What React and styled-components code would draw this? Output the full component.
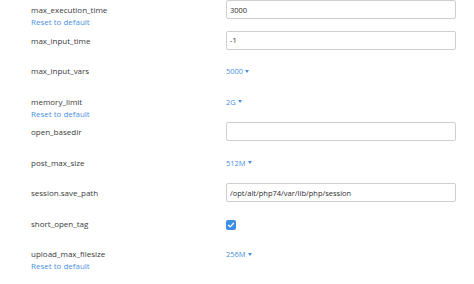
import React from 'react';
import styled, { createGlobalStyle } from 'styled-components';

const Global = createGlobalStyle`
  body {
    margin: 0;
    background: #ffffff;
    font-family: "Open Sans", "Noto Sans", sans-serif;
  }
`

const List = styled.div`
  display: flex;
  flex-direction: column;
  padding-left: 31px;
`

const Row = styled.div`
  display: grid;
  grid-template-columns: 195px 230px;
  height: 30.5px;
  align-items: start;
`

const LabelCell = styled.div`
  display: flex;
  flex-direction: column;
  padding-top: 4px;
`

const Label = styled.span`
  font-size: 8px;
  line-height: 12px;
  color: #3a3a3a;
`

const Reset = styled.a`
  font-size: 8px;
  line-height: 12px;
  color: #4a90e2;
  text-decoration: none;
  cursor: pointer;
`

const Input = styled.input`
  box-sizing: border-box;
  width: 230px;
  height: 19px;
  margin: 0;
  padding: 0 3px;
  border: 1px solid #cfcfcf;
  border-radius: 2px;
  font-family: "Open Sans", "Noto Sans", sans-serif;
  font-size: 7.5px;
  color: #2e2e2e;
  outline: none;
`

const Select = styled.div`
  display: flex;
  align-items: center;
  gap: 2px;
  width: fit-content;
  margin-top: 4px;
  font-size: 7.5px;
  line-height: 12px;
  color: #4a90e2;
  cursor: pointer;
  &::after {
    content: '';
    border-left: 2.5px solid transparent;
    border-right: 2.5px solid transparent;
    border-top: 3px solid #4a90e2;
  }
`

const Check = styled.div`
  display: flex;
  align-items: center;
  justify-content: center;
  width: 10px;
  height: 10px;
  margin-top: 6px;
  border-radius: 2px;
  background: #3b8ee6;
`

const settings = [
  { name: 'max_execution_time', type: 'input', value: '3000', reset: true },
  { name: 'max_input_time', type: 'input', value: '-1' },
  { name: 'max_input_vars', type: 'select', value: '5000' },
  { name: 'memory_limit', type: 'select', value: '2G', reset: true },
  { name: 'open_basedir', type: 'input', value: '' },
  { name: 'post_max_size', type: 'select', value: '512M' },
  { name: 'session.save_path', type: 'input', value: '/opt/alt/php74/var/lib/php/session' },
  { name: 'short_open_tag', type: 'check', value: true },
  { name: 'upload_max_filesize', type: 'select', value: '256M', reset: true },
]

const Control = ({ item }) => {
  if (item.type === 'input') return <Input defaultValue={item.value} />
  if (item.type === 'select') return <Select>{item.value}</Select>
  return (
    <Check>
      <svg width="8" height="8" viewBox="0 0 8 8">
        <path d="M1.4 4.2 L3.2 5.9 L6.6 2.2" fill="none" stroke="#fff" strokeWidth="1.3" strokeLinecap="round" strokeLinejoin="round" />
      </svg>
    </Check>
  )
}

const App = () => {
  return (
    <>
      <Global />
      <List>
        {settings.map(item => (
          <Row key={item.name}>
            <LabelCell>
              <Label>{item.name}</Label>
              {item.reset && <Reset>Reset to default</Reset>}
            </LabelCell>
            <Control item={item} />
          </Row>
        ))}
      </List>
    </>
  )
}

export default App;
